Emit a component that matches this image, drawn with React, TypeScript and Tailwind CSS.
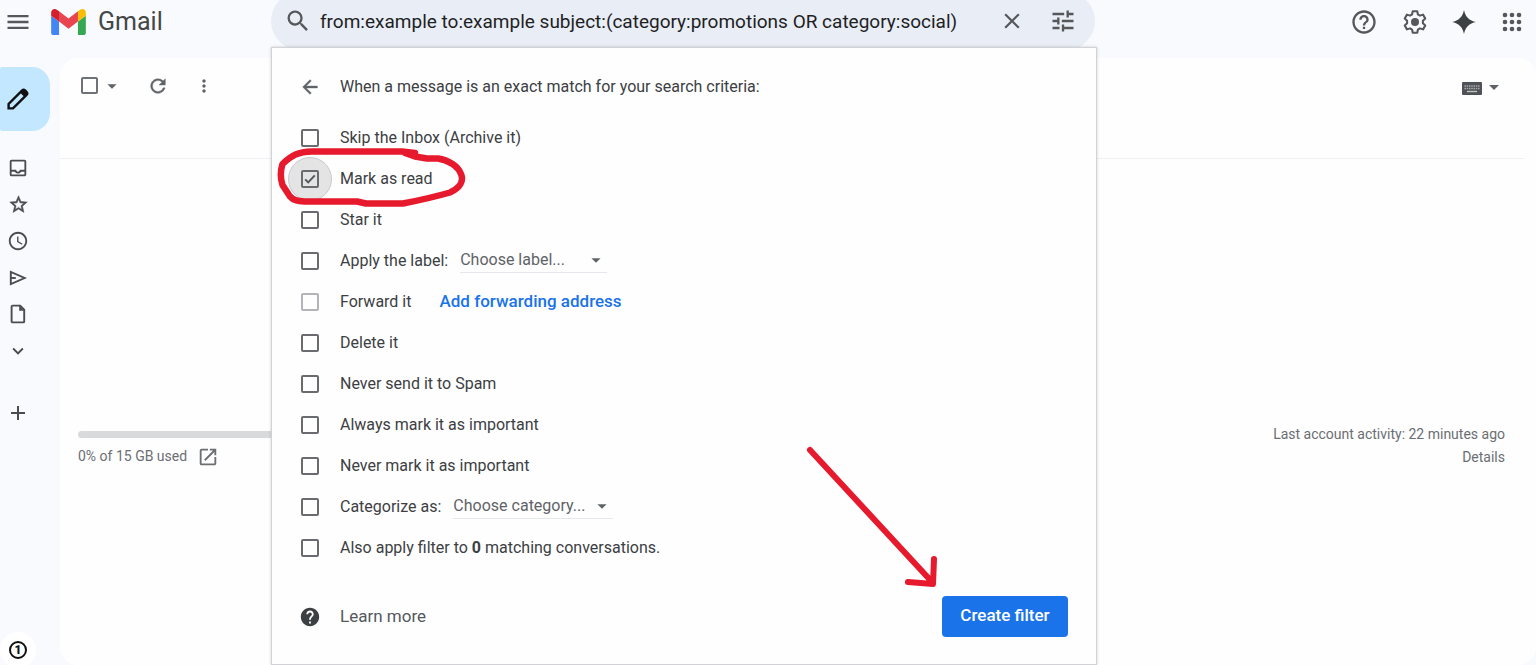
import { useState } from "react";
import type { ReactNode } from "react";
import {
  MdAccessTime,
  MdAdd,
  MdArrowBack,
  MdArrowDropDown,
  MdClose,
  MdExpandMore,
  MdHelp,
  MdHelpOutline,
  MdMenu,
  MdMoreVert,
  MdOpenInNew,
  MdOutlineInbox,
  MdRefresh,
  MdSearch,
  MdStarOutline,
  MdTune,
} from "react-icons/md";

function GmailLogo() {
  return (
    <svg viewBox="52 42 88 66" className="h-[26px] w-[35px] shrink-0" aria-hidden="true">
      <path fill="#4285f4" d="M58 108h14V74L52 59v43c0 3.32 2.69 6 6 6" />
      <path fill="#34a853" d="M120 108h14c3.32 0 6-2.69 6-6V59l-20 15" />
      <path fill="#fbbc04" d="M120 48v26l20-15v-8c0-7.42-8.47-11.65-14.4-7.2" />
      <path fill="#e94550" d="M72 74V48l24 18 24-18v26L96 92" />
      <path fill="#d3202c" d="M52 51v8l20 15V48l-5.6-4.2c-5.94-4.45-14.4-.22-14.4 7.2" />
    </svg>
  );
}

function PencilIcon() {
  return (
    <svg viewBox="0 0 22 22" className="size-[22px]" aria-hidden="true">
      <path d="M1.6 20.4V16L15.2 2.4a2 2 0 0 1 2.8 0l1.6 1.6a2 2 0 0 1 0 2.8L6 20.4z" fill="#c2e7ff" stroke="#111" strokeWidth="2.4" />
      <path d="M13 4.600l2.600-2.600c.9-.9 2-.9 2.900 0l1.500 1.500c.9.9.9 2 0 2.900L17.400 9z" fill="#111" />
    </svg>
  );
}

function SendIcon() {
  return (
    <svg viewBox="0 0 18 16" className="h-4 w-[18px]" fill="none" stroke="currentColor" strokeWidth="1.9" aria-hidden="true">
      <path d="M1.8 2v12L15.600 8z" />
      <path d="M1.8 8h5" />
    </svg>
  );
}

function FileIcon() {
  return (
    <svg viewBox="0 0 16 20" className="h-5 w-4" fill="none" stroke="currentColor" strokeWidth="1.9" aria-hidden="true">
      <path d="M2.6 1.6h7.6l4 4v11.8a1 1 0 0 1-1 1H2.6a1 1 0 0 1-1-1V2.6a1 1 0 0 1 1-1z" />
      <path d="M9.2 1.6v5.2h5z" fill="currentColor" stroke="none" />
    </svg>
  );
}

function GearIcon() {
  return (
    <svg viewBox="0 0 24 24" className="size-[26px]" aria-hidden="true">
      <path
        fill="none"
        stroke="currentColor"
        strokeWidth="1.9"
        strokeLinejoin="round"
        d="M9.9 2.100h4.200l.6 2.900 1.900 1.100 2.800-.9 2.100 3.600-2.200 2v2.400l2.200 2-2.100 3.600-2.800-.9-1.900 1.100-.6 2.900H9.900l-.6-2.900-1.900-1.100-2.800.9-2.100-3.600 2.200-2v-2.400l-2.200-2 2.100-3.600 2.800.9 1.900-1.100z"
      />
      <circle cx="12" cy="12" r="3.7" fill="currentColor" />
    </svg>
  );
}

function SparkIcon() {
  return (
    <svg viewBox="0 0 24 24" className="size-6" aria-hidden="true">
      <path fill="#3c4043" d="M12 0c1.200 6.600 5.400 10.800 12 12-6.600 1.200-10.800 5.400-12 12-1.200-6.600-5.400-10.800-12-12 6.600-1.200 10.800-5.400 12-12z" />
    </svg>
  );
}

function AppsIcon() {
  return (
    <svg viewBox="0 0 20 20" className="size-5" fill="currentColor" aria-hidden="true">
      {[3, 10, 17].map((cy) => [3, 10, 17].map((cx) => <circle key={`${cx}-${cy}`} cx={cx} cy={cy} r="2.3" />))}
    </svg>
  );
}

function KeyboardIcon() {
  return (
    <svg viewBox="0 0 20 13" className="h-[13px] w-5" aria-hidden="true">
      <rect width="20" height="13" rx="1" fill="#4f5256" />
      <path d="M2.500 4h15M2.500 6.500h15" stroke="#a9abad" strokeWidth="1.500" strokeDasharray="1.500 .75" />
      <path d="M5 9.500h10" stroke="#c4c5c7" strokeWidth="1.400" />
    </svg>
  );
}

function IconButton({ label, className = "", children }: { label: string; className?: string; children: ReactNode }) {
  return (
    <button type="button" aria-label={label} className={`flex shrink-0 items-center justify-center ${className}`}>
      {children}
    </button>
  );
}

function CheckBox({ id, checked, disabled, onToggle }: { id: string; checked: boolean; disabled?: boolean; onToggle: () => void }) {
  return (
    <span className="relative flex size-[18px] shrink-0">
      {checked && <span className="absolute -inset-[13px] rounded-full border border-[#c9c9d0] bg-[#e4e4e5]" />}
      <input
        id={id}
        type="checkbox"
        checked={checked}
        disabled={disabled}
        onChange={onToggle}
        className="relative size-[18px] appearance-none rounded-xs border-2 border-[#6a6b6e] disabled:border-[#b3b4b9]"
      />
      {checked && (
        <svg viewBox="0 0 18 18" className="pointer-events-none absolute inset-0 size-[18px]" fill="none" stroke="#55575a" strokeWidth="2" aria-hidden="true">
          <path d="M4.200 9.400l3 3 6.600-7" />
        </svg>
      )}
    </span>
  );
}

function Picker({ label, options, className }: { label: string; options: string[]; className: string }) {
  return (
    <span className={`relative flex h-6 items-center border-b border-[#e6e7ed] ${className}`}>
      <select aria-label={label} className="w-full appearance-none bg-transparent text-[#5f6368]">
        {options.map((option) => (
          <option key={option}>{option}</option>
        ))}
      </select>
      <MdArrowDropDown className="pointer-events-none absolute right-0 size-[22px] text-[#5f6368]" />
    </span>
  );
}

function CircleMark() {
  return (
    <svg viewBox="0 0 190 60" className="pointer-events-none absolute -top-[11px] -left-[25px] h-[60px] w-[190px]" fill="none" stroke="#e6192d" strokeWidth="6.500" strokeLinecap="round" strokeLinejoin="round" aria-hidden="true">
      <path d="M139 6L126 4.500H36C22 5 16 8 6.500 17C4 25 4.500 32 6.500 38L14 49.500C18 54 23 54 30 54.500H81L90 56.500H127C140 54 160 49.500 174 45.500C184 41 188 34 185 27C182 19 172 13 162 11.500H151L139 9.500L129 6" />
    </svg>
  );
}

function ArrowMark() {
  return (
    <svg viewBox="0 0 136 148" className="pointer-events-none absolute right-[128px] bottom-[47px] h-[148px] w-[136px]" fill="none" stroke="#e6192d" strokeWidth="6" strokeLinecap="round" strokeLinejoin="round" aria-hidden="true">
      <path d="M6 8L129 141M130 117L129 142L104 140" />
    </svg>
  );
}

type Rule = { id: string; text: ReactNode; disabled?: boolean; extra?: ReactNode; marked?: boolean };

const rules: Rule[] = [
  { id: "archive", text: "Skip the Inbox (Archive it)" },
  { id: "read", text: "Mark as read", marked: true },
  { id: "star", text: "Star it" },
  {
    id: "label",
    text: "Apply the label:",
    extra: <Picker label="Label" options={["Choose label..."]} className="ml-3 w-[147px]" />,
  },
  {
    id: "forward",
    text: "Forward it",
    disabled: true,
    extra: (
      <a href="#forwarding" className="ml-7 text-[17px] font-medium text-[#1a73e8]">
        Add forwarding address
      </a>
    ),
  },
  { id: "delete", text: "Delete it" },
  { id: "nospam", text: "Never send it to Spam" },
  { id: "important", text: "Always mark it as important" },
  { id: "unimportant", text: "Never mark it as important" },
  {
    id: "category",
    text: "Categorize as:",
    extra: <Picker label="Category" options={["Choose category..."]} className="ml-3 w-[160px]" />,
  },
  {
    id: "existing",
    text: (
      <>
        Also apply filter to <b>0</b> matching conversations.
      </>
    ),
  },
];

function FilterDialog() {
  const [checked, setChecked] = useState<Record<string, boolean>>({ read: true });
  return (
    <section
      aria-label="Create filter"
      className="absolute inset-x-0 top-[47px] z-10 border border-[#d2d3d6] bg-[#fefefe] pt-[18px] pr-7 pb-[27px] pl-[29px] text-base text-[#3c4043] shadow-[0_0_3px_rgba(0,0,0,0.18)]"
    >
      <div className="flex h-[41px] items-center gap-[21px]">
        <IconButton label="Back" className="w-[18px] text-[#5f6368]">
          <MdArrowBack className="size-[22px] shrink-0 [&>path:not([fill])]:stroke-[0.5]" />
        </IconButton>
        <h2>When a message is an exact match for your search criteria:</h2>
      </div>
      <ul className="mt-[10px]">
        {rules.map((rule) => (
          <li key={rule.id} className="relative flex h-[41px] items-center">
            <CheckBox
              id={rule.id}
              checked={!!checked[rule.id]}
              disabled={rule.disabled}
              onToggle={() => setChecked((c) => ({ ...c, [rule.id]: !c[rule.id] }))}
            />
            <label htmlFor={rule.id} className="ml-[21px]">
              {rule.text}
            </label>
            {rule.extra}
            {rule.marked && <CircleMark />}
          </li>
        ))}
      </ul>
      <div className="relative mt-7 flex items-center justify-between text-[17px]">
        <a href="#help" className="flex items-center gap-[19px] text-[#55585c]">
          <MdHelp className="-ml-[2px] size-[22px] text-[#3c4043]" />
          Learn more
        </a>
        <button type="button" className="h-[41px] w-[126px] rounded bg-[#1a73e8] pb-[2px] font-medium text-white">
          Create filter
        </button>
        <ArrowMark />
      </div>
    </section>
  );
}

function Header() {
  return (
    <header className="flex h-[58px] items-start text-[#55575a]">
      <div className="flex h-[43px] w-[271px] shrink-0 items-center pl-1">
        <IconButton label="Main menu" className="size-7">
          <MdMenu className="size-7" />
        </IconButton>
        <a href="#inbox" className="ml-[19px] flex items-center gap-3 text-[25px] text-[#444746]">
          <GmailLogo />
          Gmail
        </a>
      </div>
      <div className="relative min-w-0 flex-1">
        <div className="h-[47px] overflow-hidden">
          <form className="-mt-2 mr-[2px] flex h-[58px] items-center rounded-full bg-[#e8edf6] pr-[18px] pl-[13px]">
            <IconButton label="Search" className="size-7">
              <MdSearch className="size-7" />
            </IconButton>
            <input
              aria-label="Search mail"
              defaultValue="from:example to:example subject:(category:promotions OR category:social)"
              className="ml-2 min-w-0 flex-1 bg-transparent pt-[2px] text-[19px] text-[#1f1f1f] outline-none"
            />
            <IconButton label="Clear search" className="size-7">
              <MdClose className="size-[26px]" />
            </IconButton>
            <IconButton label="Search options" className="ml-[23px] size-7">
              <MdTune className="size-7" />
            </IconButton>
          </form>
        </div>
        <FilterDialog />
      </div>
      <div className="flex h-[43px] w-[439px] shrink-0 items-center justify-end gap-6 pr-3">
        <IconButton label="Support" className="size-7">
          <MdHelpOutline className="size-7" />
        </IconButton>
        <IconButton label="Settings">
          <GearIcon />
        </IconButton>
        <IconButton label="Gemini">
          <SparkIcon />
        </IconButton>
        <IconButton label="Google apps" className="size-6">
          <AppsIcon />
        </IconButton>
      </div>
    </header>
  );
}

function Sidebar() {
  return (
    <aside className="flex w-[60px] shrink-0 flex-col pt-[9px] text-[#4a4c4f]">
      <button type="button" aria-label="Compose" className="flex h-16 w-[50px] items-center rounded-l-xs rounded-r-[18px] bg-[#c2e7ff] pl-[7px]">
        <PencilIcon />
      </button>
      <nav aria-label="Folders" className="mt-[19px] flex w-9 flex-col items-stretch">
        <IconButton label="Inbox" className="h-[36px]"><MdOutlineInbox className="size-[22px]" /></IconButton>
        <IconButton label="Starred" className="h-[37px]"><MdStarOutline className="size-[21px] [&>path:not([fill])]:stroke-[0.6]" /></IconButton>
        <IconButton label="Snoozed" className="h-[36px]"><MdAccessTime className="size-[22px]" /></IconButton>
        <IconButton label="Sent" className="h-[37px]"><SendIcon /></IconButton>
        <IconButton label="Drafts" className="h-[36px]"><FileIcon /></IconButton>
        <IconButton label="More" className="h-[37px]"><MdExpandMore className="size-[22px]" /></IconButton>
        <IconButton label="Create new label" className="mt-[25px] h-[37px]"><MdAdd className="size-6" /></IconButton>
      </nav>
      <button type="button" aria-label="Notifications" className="mt-auto -mb-[3px] flex size-9 items-center justify-center rounded-full bg-white">
        <span className="flex size-[18px] items-center justify-center rounded-full border-2 border-[#111] text-[12px] leading-none font-black text-[#111]">1</span>
      </button>
    </aside>
  );
}

function MailPanel() {
  return (
    <main className="flex min-w-0 flex-1 flex-col rounded-[18px] bg-[#fefefe] text-sm text-[#6b6e73]">
      <div className="mr-3 flex h-[101px] items-start border-b border-[#eff1f4] pt-4 pl-[21px] text-[#5f6368]">
        <div className="flex h-[23px] flex-1 items-center">
          <input type="checkbox" aria-label="Select all" className="size-[17px] appearance-none rounded-xs border-2 border-[#6f7276]" />
          <IconButton label="Select options" className="ml-[3px] size-[22px]"><MdArrowDropDown className="size-6" /></IconButton>
          <IconButton label="Refresh" className="ml-6 size-[22px]"><MdRefresh className="size-[22px] [&>path:not([fill])]:stroke-[0.4]" /></IconButton>
          <IconButton label="More actions" className="ml-6 size-[22px]"><MdMoreVert className="size-[20px]" /></IconButton>
        </div>
        <div className="flex h-[25px] items-center pr-[18px]">
          <IconButton label="Input tools" className="pt-1"><KeyboardIcon /></IconButton>
          <IconButton label="Input tool options"><MdArrowDropDown className="size-6" /></IconButton>
        </div>
      </div>
      <footer className="mt-[264px] flex items-start justify-between pr-[31px] pl-[18px] leading-[23px]">
        <div className="w-[260px]">
          <div className="mt-2 h-[7px] rounded-full bg-[#d9dadc]" />
          <div className="mt-[7px] flex items-center gap-[10px]">
            0% of 15 GB used
            <a href="#storage" aria-label="Manage storage"><MdOpenInNew className="size-[22px]" /></a>
          </div>
        </div>
        <div className="text-right">
          <p>Last account activity: 22 minutes ago</p>
          <a href="#details">Details</a>
        </div>
      </footer>
    </main>
  );
}

export default function App() {
  return (
    <div className="flex min-h-screen flex-col overflow-x-hidden bg-[#f8fafe] font-['Roboto',sans-serif]">
      <Header />
      <div className="flex flex-1">
        <Sidebar />
        <MailPanel />
      </div>
    </div>
  );
}
